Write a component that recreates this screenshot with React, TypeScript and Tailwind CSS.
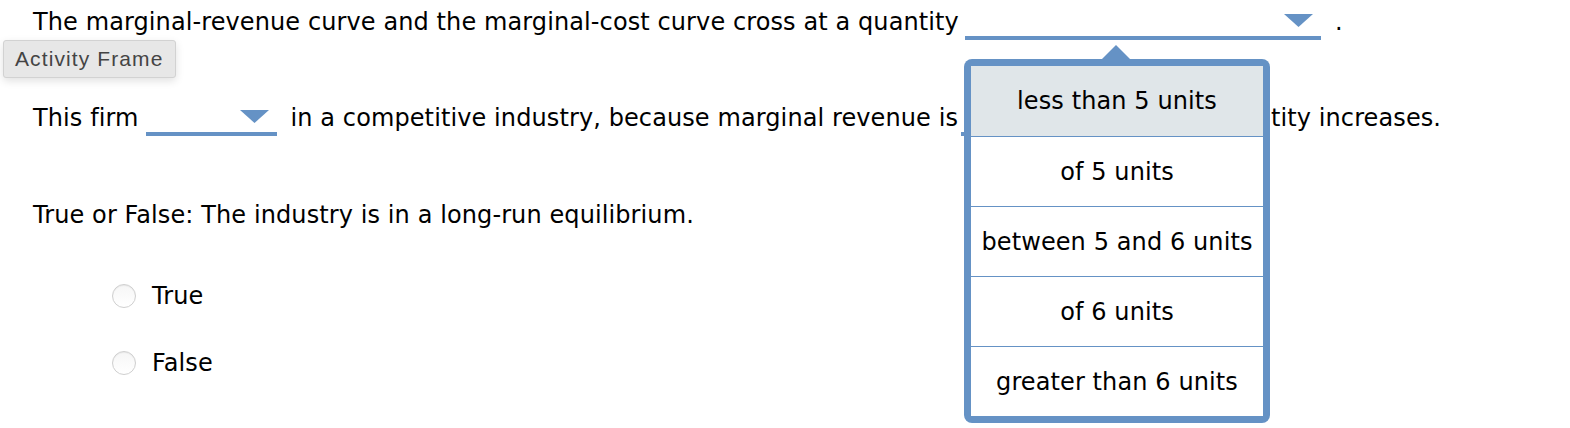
import React from 'react';

const blue = 'bg-[#6592c5]';

const Dropdown: React.FC<{ width: string; hideArrow?: boolean }> = ({ width, hideArrow }) => (
  <span className={`${width} h-[32px] shrink-0 border-b-4 border-[#6592c5] flex justify-end items-start pr-[8px] pt-[6px]`}>
    {!hideArrow && (
      <svg width="29" height="13" viewBox="0 0 29 13">
        <polygon points="0,0 29,0 14.5,13" fill="#6592c5" />
      </svg>
    )}
  </span>
);

const Radio: React.FC<{ label: string }> = ({ label }) => (
  <label className="flex items-center h-[28px] ml-[79px]">
    <span className="w-[24px] h-[24px] rounded-full border border-[#cfcfcf] bg-gradient-to-b from-[#f6f6f6] to-white shadow-[inset_0_1px_1px_rgba(0,0,0,0.06)]" />
    <span className="ml-[16px] leading-[28px]">{label}</span>
  </label>
);

const options = ['less than 5 units', 'of 5 units', 'between 5 and 6 units', 'of 6 units', 'greater than 6 units'];

export default function App() {
  return (
    <div className="relative w-[1570px] h-[428px] bg-white overflow-hidden text-black text-[24px] tracking-[0.1px] font-['DejaVu_Sans',Verdana,sans-serif]">
      <div className="pt-[8px] pl-[33px]">
        <div className="flex items-start h-[32px] whitespace-nowrap">
          <span className="leading-[28px]">The marginal-revenue curve and the marginal-cost curve cross at a quantity</span>
          <span className="ml-[6px]">
            <Dropdown width="w-[356px]" />
          </span>
          <span className="leading-[28px] ml-[14px]">.</span>
        </div>

        <div className="flex items-start h-[32px] mt-[64px] whitespace-nowrap">
          <span className="leading-[28px]">This firm</span>
          <span className="ml-[7px]">
            <Dropdown width="w-[131px]" />
          </span>
          <span className="leading-[28px] ml-[14px]">in a competitive industry, because marginal revenue is</span>
          <span className="ml-[3px]">
            <Dropdown width="w-[200px]" />
          </span>
          <span className="leading-[28px] ml-[14px]">as quantity increases.</span>
        </div>

        <div className="leading-[28px] mt-[65px]">True or False: The industry is in a long-run equilibrium.</div>

        <div className="mt-[53px] flex flex-col gap-[39px]">
          <Radio label="True" />
          <Radio label="False" />
        </div>
      </div>

      {/* tooltip */}
      <div className="absolute left-[3px] top-[40px] w-[173px] h-[38px] rounded-[3px] border border-[#d2d2d2] bg-[#e7e7e7] shadow-[0_3px_8px_rgba(0,0,0,0.12)] flex items-center pl-[11px] text-[#444] text-[21px] tracking-[1.1px] font-['Liberation_Sans',Arial,sans-serif]">
        Activity Frame
      </div>

      {/* open dropdown menu */}
      <div className="absolute left-[964px] top-[59px] w-[306px]">
        <svg className="absolute left-[138px] -top-[14px]" width="28" height="14" viewBox="0 0 28 14">
          <polygon points="0,14 14,0 28,14" fill="#6592c5" />
        </svg>
        <div className={`${blue} rounded-[8px] p-[7px]`}>
          <ul className="bg-white">
            {options.map((o, i) => (
              <li
                key={o}
                className={`h-[70px] flex items-center justify-center whitespace-nowrap ${i === 0 ? 'bg-[#e0e6e9]' : 'border-t border-[#6592c5]'}`}
              >
                {o}
              </li>
            ))}
          </ul>
        </div>
      </div>
    </div>
  );
}
